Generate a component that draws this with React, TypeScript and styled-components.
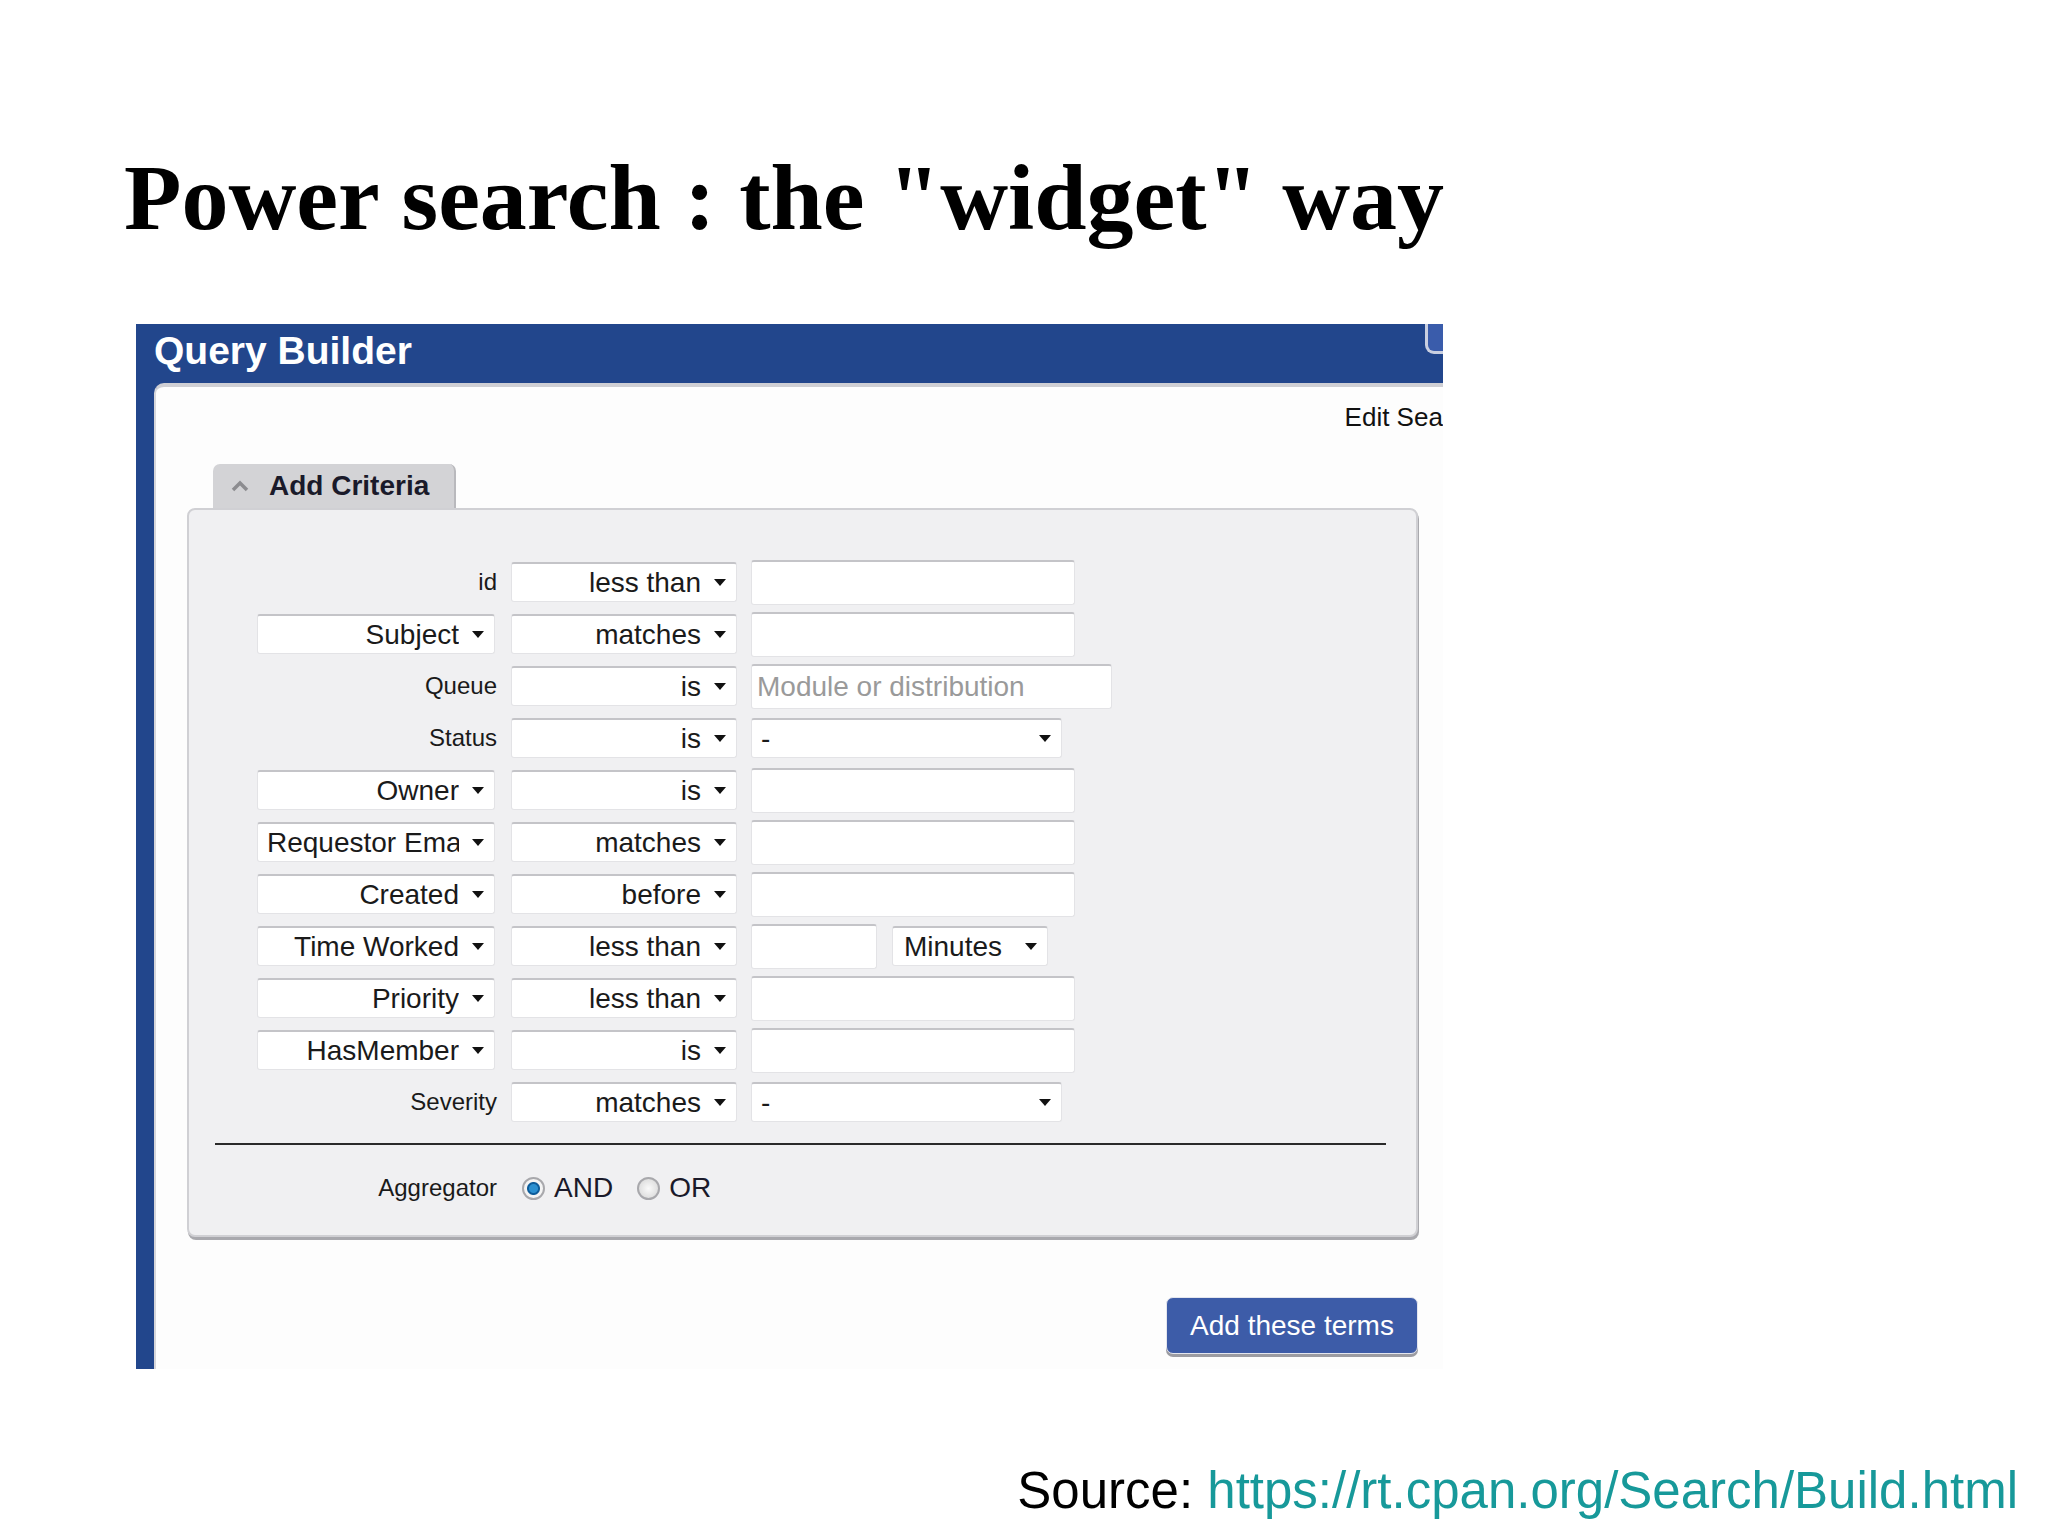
import React from "react";
import styled, { createGlobalStyle } from "styled-components";

const GlobalStyle = createGlobalStyle`
  html, body { margin: 0; padding: 0; background: #ffffff; }
  * { box-sizing: border-box; }
`;

type Row = {
  label?: string;
  field?: string;
  op: string;
  value: "input" | "queue" | "select" | "time";
};

const ROWS: Row[] = [
  { label: "id", op: "less than", value: "input" },
  { field: "Subject", op: "matches", value: "input" },
  { label: "Queue", op: "is", value: "queue" },
  { label: "Status", op: "is", value: "select" },
  { field: "Owner", op: "is", value: "input" },
  { field: "Requestor Email", op: "matches", value: "input" },
  { field: "Created", op: "before", value: "input" },
  { field: "Time Worked", op: "less than", value: "time" },
  { field: "Priority", op: "less than", value: "input" },
  { field: "HasMember", op: "is", value: "input" },
  { label: "Severity", op: "matches", value: "select" },
];

const Slide = styled.div`
  width: 2048px;
  height: 1536px;
  overflow: hidden;
  background: #ffffff;
  display: flex;
  flex-direction: column;
`;

const Title = styled.h1`
  margin: 0;
  padding: 150px 0 0 124px;
  font: bold 94px/1 "Liberation Serif", "Times New Roman", serif;
  color: #000;
  white-space: nowrap;
`;

const Panel = styled.div`
  margin: 80px 0 0 136px;
  width: 1307px;
  display: flex;
  flex-direction: column;
`;

const Header = styled.div`
  height: 59px;
  background: #22468c;
  display: flex;
  align-items: center;
  padding: 0 0 6px 18px;
  overflow: hidden;
`;

const HeaderTitle = styled.div`
  flex: 1;
  font: bold 39px "Liberation Sans", Arial, sans-serif;
  color: #ffffff;
`;

const HeaderTab = styled.div`
  align-self: flex-start;
  margin-top: -6px;
  width: 42px;
  height: 36px;
  margin-right: -24px;
  background: #3a5cab;
  border: 3px solid #c9cfe0;
  border-top: none;
  border-radius: 0 0 9px 9px;
`;

const Body = styled.div`
  height: 986px;
  display: flex;
  background: #22468c;
`;

const Strip = styled.div`
  width: 18px;
  flex-shrink: 0;
`;

const Content = styled.div`
  flex: 1;
  background: #fdfdfd;
  border-top: 4px solid #cfcfd4;
  border-left: 2px solid #d6d6da;
  border-top-left-radius: 10px;
  display: flex;
  flex-direction: column;
  overflow: hidden;
`;

const EditRow = styled.div`
  display: flex;
  justify-content: flex-end;
  padding-top: 15px;
  height: 45px;
`;

const EditLink = styled.span`
  font: 26px/30px "Liberation Sans", Arial, sans-serif;
  color: #111;
  margin-right: -36px;
  white-space: nowrap;
`;

const Tab = styled.div`
  margin: 32px 0 0 57px;
  width: 243px;
  height: 44px;
  background: #d3d3d6;
  border-radius: 7px 7px 0 0;
  border-right: 2px solid #b9b9bd;
  display: flex;
  align-items: center;
  gap: 20px;
  padding-left: 18px;
  font: bold 28px "Liberation Sans", Arial, sans-serif;
  color: #1a1a2a;
`;

const Box = styled.div`
  margin: 0 25px 0 31px;
  background: #f0f0f2;
  border: 2px solid #d0d0d4;
  border-radius: 8px;
  box-shadow: 1px 3px 0 #a9a9ae;
  padding: 51px 0 26px 0;
  display: flex;
  flex-direction: column;
`;

const Grid = styled.div`
  display: grid;
  grid-template-columns: 240px 226px 1fr;
  grid-auto-rows: 42px;
  column-gap: 14px;
  row-gap: 10px;
  align-items: center;
  padding-left: 68px;
`;

const Label = styled.div`
  justify-self: end;
  font: 24px "Liberation Sans", Arial, sans-serif;
  color: #1a1a1a;
  white-space: nowrap;
`;

const Select = styled.div<{ $w: number; $left?: boolean }>`
  width: ${(p) => p.$w}px;
  height: 40px;
  display: flex;
  align-items: center;
  gap: 13px;
  padding: 0 10px 0 9px;
  background: #ffffff;
  border: 1px solid #e3e3e6;
  border-top: 2px solid #c4c4c8;
  border-radius: 3px;
  font: 28px "Liberation Sans", Arial, sans-serif;
  color: #1a1a1a;

  span {
    flex: 1;
    overflow: hidden;
    white-space: nowrap;
    text-align: ${(p) => (p.$left ? "left" : "right")};
  }
`;

const Arrow = styled.i`
  flex-shrink: 0;
  width: 0;
  height: 0;
  border-left: 6px solid transparent;
  border-right: 6px solid transparent;
  border-top: 7px solid #111;
`;

const Input = styled.div<{ $w: number }>`
  width: ${(p) => p.$w}px;
  height: 45px;
  display: flex;
  align-items: center;
  padding-left: 5px;
  background: #ffffff;
  border: 1px solid #e3e3e6;
  border-top: 2px solid #c4c4c8;
  border-radius: 3px;
  font: 28px "Liberation Sans", Arial, sans-serif;
  color: #9a9a9a;
  white-space: nowrap;
`;

const TimeCell = styled.div`
  display: flex;
  align-items: center;
  gap: 15px;
`;

const Separator = styled.hr`
  margin: 20px 30px 0 26px;
  border: none;
  height: 2px;
  background: #2a2a2a;
`;

const AggRow = styled(Grid)`
  margin-top: 22px;
`;

const Radios = styled.div`
  display: flex;
  align-items: center;
  padding-left: 11px;
  font: 28px "Liberation Sans", Arial, sans-serif;
  color: #1a1a2a;
`;

const Radio = styled.span<{ $on?: boolean }>`
  width: 23px;
  height: 23px;
  border-radius: 50%;
  border: 2px solid #a8a8ac;
  background: ${(p) =>
    p.$on
      ? "radial-gradient(circle, #2a8fd0 0 4px, #0d5c9a 5px 6px, #f4f4f4 7px)"
      : "radial-gradient(circle, #fafafa 0, #dedede 10px)"};
  margin-right: 9px;
`;

const RadioText = styled.span`
  margin-right: 24px;
`;

const Footer = styled.div`
  display: flex;
  justify-content: flex-end;
  padding: 60px 25px 0 0;
`;

const AddButton = styled.button`
  width: 252px;
  height: 57px;
  background: #3d5ca8;
  color: #ffffff;
  border: 1px solid #e4e6ee;
  border-radius: 7px;
  box-shadow: 0 3px 0 #9c9ca2;
  font: 28px "Liberation Sans", Arial, sans-serif;
  cursor: pointer;
`;

const Source = styled.div`
  margin-top: 96px;
  padding-right: 30px;
  text-align: right;
  font: 51px/1 "Liberation Sans", Arial, sans-serif;
  color: #000;
  white-space: nowrap;

  a {
    color: #17999a;
    text-decoration: none;
  }
`;

const Chevron = () => (
  <svg width="18" height="12" viewBox="0 0 18 12">
    <polyline points="2,10 9,3 16,10" fill="none" stroke="#8c8c90" strokeWidth="3.5" />
  </svg>
);

const ValueCell: React.FC<{ kind: Row["value"] }> = ({ kind }) => {
  if (kind === "queue") return <Input $w={361}>Module or distribution</Input>;
  if (kind === "select")
    return (
      <Select $w={311} $left>
        <span>-</span>
        <Arrow />
      </Select>
    );
  if (kind === "time")
    return (
      <TimeCell>
        <Input $w={126} />
        <Select $w={156} $left>
          <span style={{ paddingLeft: 2 }}>Minutes</span>
          <Arrow />
        </Select>
      </TimeCell>
    );
  return <Input $w={324} />;
};

export default function App() {
  return (
    <Slide>
      <GlobalStyle />
      <Title>Power search : the "widget" way</Title>
      <Panel>
        <Header>
          <HeaderTitle>Query Builder</HeaderTitle>
          <HeaderTab />
        </Header>
        <Body>
          <Strip />
          <Content>
            <EditRow>
              <EditLink>Edit Search</EditLink>
            </EditRow>
            <Tab>
              <Chevron />
              Add Criteria
            </Tab>
            <Box>
              <Grid>
                {ROWS.map((row, i) => (
                  <React.Fragment key={i}>
                    {row.field ? (
                      <Select $w={238}>
                        <span>{row.field}</span>
                        <Arrow />
                      </Select>
                    ) : (
                      <Label>{row.label}</Label>
                    )}
                    <Select $w={226}>
                      <span>{row.op}</span>
                      <Arrow />
                    </Select>
                    <ValueCell kind={row.value} />
                  </React.Fragment>
                ))}
              </Grid>
              <Separator />
              <AggRow>
                <Label>Aggregator</Label>
                <Radios>
                  <Radio $on />
                  <RadioText>AND</RadioText>
                  <Radio />
                  <RadioText>OR</RadioText>
                </Radios>
              </AggRow>
            </Box>
            <Footer>
              <AddButton>Add these terms</AddButton>
            </Footer>
          </Content>
        </Body>
      </Panel>
      <Source>
        Source: <a href="#">https://rt.cpan.org/Search/Build.html</a>
      </Source>
    </Slide>
  );
}
